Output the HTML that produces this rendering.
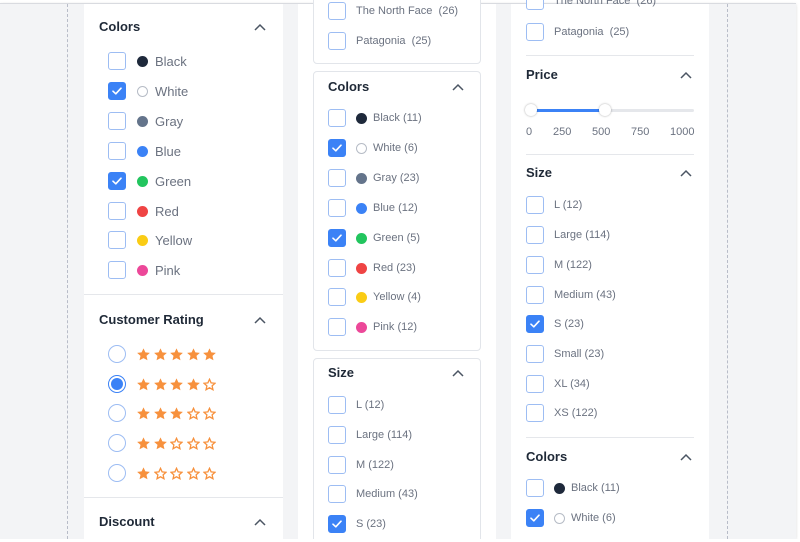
<!DOCTYPE html>
<html style="overflow:hidden;width:800px;height:542px"><head><meta charset="utf-8"><style>
*{box-sizing:border-box;margin:0;padding:0}
body{width:800px;height:542px;background:#fff;font-family:"Liberation Sans",Arial,sans-serif;position:relative;overflow:hidden}
.frame{position:absolute;left:0;top:3px;width:796px;height:536px;background:#f3f4f6;border-top:1px solid #d9dbe0;box-shadow:0 1px 3px rgba(0,0,0,.15)}
.dash{position:absolute;top:4px;height:535px;border-left:1px dashed #b8bcc8}
.panel{position:absolute;top:4px;height:535px;background:#fff}
.card{position:absolute;border:1px solid #e2e5ea;border-radius:4px;background:#fff}
.hr{position:absolute;height:1px;background:#e5e7eb}
.h{position:absolute;font-weight:bold;color:#1f2937;font-size:13px;line-height:16px}
.chev{position:absolute;width:12px;height:8px}
.r{position:absolute;display:flex;align-items:center;height:18px;color:#6b7280;white-space:nowrap}
.cb{width:18px;height:18px;border:1.5px solid #9dbdf3;border-radius:3px;background:#fff;flex:none;display:flex;align-items:center;justify-content:center}
.cb.on{background:#3b82f6;border-color:#3b82f6}
.d{width:11px;height:11px;border-radius:50%;flex:none}
.c1{font-size:13px}.c1 .cb{margin-right:11px}.c1 .d{margin-right:7px}
.c2{font-size:11px}.c2 .cb{margin-right:10px}.c2 .d{margin-right:6px}
.rad{width:18px;height:18px;border:1.5px solid #9dbdf3;border-radius:50%;flex:none;margin-right:11px;display:flex;align-items:center;justify-content:center}
.stars svg{width:13px;height:13px;margin-right:3.5px}
.lbl{position:absolute;font-size:11px;color:#6b7280;top:126px}
</style></head><body>
<svg width="0" height="0" style="position:absolute"><defs>
<symbol id="sf" viewBox="2 2 20 19"><path d="M12 2l2.9 6.3 6.9.7-5.2 4.6 1.5 6.8L12 17l-6.1 3.4 1.5-6.8L2.2 9l6.9-.7z" fill="#f7913d"/></symbol>
<symbol id="so" viewBox="2 2 20 19"><path d="M12 3.5l2.5 5.5 6 .6-4.5 4 1.3 5.9L12 16.5l-5.3 3 1.3-5.9-4.5-4 6-.6z" fill="none" stroke="#f7913d" stroke-width="2"/></symbol>
<symbol id="ck" viewBox="0 0 10 8"><path d="M1 4.2l2.8 2.6L9 1.2" fill="none" stroke="#fff" stroke-width="1.6" stroke-linecap="round" stroke-linejoin="round"/></symbol>
<symbol id="cv" viewBox="0 0 12 8"><path d="M1 7l5-5 5 5" fill="none" stroke="#4b5563" stroke-width="1.5"/></symbol>
</defs></svg>
<div class="frame"></div>
<div class="dash" style="left:67px"></div>
<div class="dash" style="left:727px"></div>

<!-- Column 1 -->
<div class="panel" style="left:84px;width:199px"></div>
<div class="h" style="left:99px;top:19px">Colors</div>
<svg class="chev" style="left:254px;top:23px"><use href="#cv"/></svg>
<div class="r c1" style="left:108px;top:52px"><span class="cb"></span><span class="d" style="background:#1e293b"></span>Black</div>
<div class="r c1" style="left:108px;top:82px"><span class="cb on"><svg width="10" height="8"><use href="#ck"/></svg></span><span class="d" style="border:1px solid #b6bcc6"></span>White</div>
<div class="r c1" style="left:108px;top:112px"><span class="cb"></span><span class="d" style="background:#64748b"></span>Gray</div>
<div class="r c1" style="left:108px;top:142px"><span class="cb"></span><span class="d" style="background:#3b82f6"></span>Blue</div>
<div class="r c1" style="left:108px;top:172px"><span class="cb on"><svg width="10" height="8"><use href="#ck"/></svg></span><span class="d" style="background:#22c55e"></span>Green</div>
<div class="r c1" style="left:108px;top:202px"><span class="cb"></span><span class="d" style="background:#ef4444"></span>Red</div>
<div class="r c1" style="left:108px;top:231px"><span class="cb"></span><span class="d" style="background:#facc15"></span>Yellow</div>
<div class="r c1" style="left:108px;top:261px"><span class="cb"></span><span class="d" style="background:#ec4899"></span>Pink</div>
<div class="hr" style="left:84px;width:199px;top:294px"></div>
<div class="h" style="left:99px;top:312px">Customer Rating</div>
<svg class="chev" style="left:254px;top:316px"><use href="#cv"/></svg>
<div class="r stars" style="left:108px;top:345px"><span class="rad"></span><svg><use href="#sf"/></svg><svg><use href="#sf"/></svg><svg><use href="#sf"/></svg><svg><use href="#sf"/></svg><svg><use href="#sf"/></svg></div>
<div class="r stars" style="left:108px;top:375px"><span class="rad" style="border-color:#3b82f6"><span style="width:12px;height:12px;border-radius:50%;background:#3b82f6"></span></span><svg><use href="#sf"/></svg><svg><use href="#sf"/></svg><svg><use href="#sf"/></svg><svg><use href="#sf"/></svg><svg><use href="#so"/></svg></div>
<div class="r stars" style="left:108px;top:404px"><span class="rad"></span><svg><use href="#sf"/></svg><svg><use href="#sf"/></svg><svg><use href="#sf"/></svg><svg><use href="#so"/></svg><svg><use href="#so"/></svg></div>
<div class="r stars" style="left:108px;top:434px"><span class="rad"></span><svg><use href="#sf"/></svg><svg><use href="#sf"/></svg><svg><use href="#so"/></svg><svg><use href="#so"/></svg><svg><use href="#so"/></svg></div>
<div class="r stars" style="left:108px;top:464px"><span class="rad"></span><svg><use href="#sf"/></svg><svg><use href="#so"/></svg><svg><use href="#so"/></svg><svg><use href="#so"/></svg><svg><use href="#so"/></svg></div>
<div class="hr" style="left:84px;width:199px;top:497px"></div>
<div class="h" style="left:99px;top:514px">Discount</div>
<svg class="chev" style="left:254px;top:518px"><use href="#cv"/></svg>

<!-- Column 2 -->
<div class="panel" style="left:298px;width:198px"></div>
<div class="card" style="left:313px;top:-10px;width:168px;height:74px"></div>
<div class="r c2" style="left:328px;top:2px"><span class="cb"></span>The North Face&nbsp; (26)</div>
<div class="r c2" style="left:328px;top:32px"><span class="cb"></span>Patagonia&nbsp; (25)</div>
<div class="card" style="left:313px;top:71px;width:168px;height:280px"></div>
<div class="h" style="left:328px;top:79px">Colors</div>
<svg class="chev" style="left:452px;top:83px"><use href="#cv"/></svg>
<div class="r c2" style="left:328px;top:109px"><span class="cb"></span><span class="d" style="background:#1e293b"></span>Black (11)</div>
<div class="r c2" style="left:328px;top:139px"><span class="cb on"><svg width="10" height="8"><use href="#ck"/></svg></span><span class="d" style="border:1px solid #b6bcc6"></span>White (6)</div>
<div class="r c2" style="left:328px;top:169px"><span class="cb"></span><span class="d" style="background:#64748b"></span>Gray (23)</div>
<div class="r c2" style="left:328px;top:199px"><span class="cb"></span><span class="d" style="background:#3b82f6"></span>Blue (12)</div>
<div class="r c2" style="left:328px;top:229px"><span class="cb on"><svg width="10" height="8"><use href="#ck"/></svg></span><span class="d" style="background:#22c55e"></span>Green (5)</div>
<div class="r c2" style="left:328px;top:259px"><span class="cb"></span><span class="d" style="background:#ef4444"></span>Red (23)</div>
<div class="r c2" style="left:328px;top:288px"><span class="cb"></span><span class="d" style="background:#facc15"></span>Yellow (4)</div>
<div class="r c2" style="left:328px;top:318px"><span class="cb"></span><span class="d" style="background:#ec4899"></span>Pink (12)</div>
<div class="card" style="left:313px;top:358px;width:168px;height:195px"></div>
<div class="h" style="left:328px;top:365px">Size</div>
<svg class="chev" style="left:452px;top:369px"><use href="#cv"/></svg>
<div class="r c2" style="left:328px;top:396px"><span class="cb"></span>L (12)</div>
<div class="r c2" style="left:328px;top:426px"><span class="cb"></span>Large (114)</div>
<div class="r c2" style="left:328px;top:456px"><span class="cb"></span>M (122)</div>
<div class="r c2" style="left:328px;top:485px"><span class="cb"></span>Medium (43)</div>
<div class="r c2" style="left:328px;top:515px"><span class="cb on"><svg width="10" height="8"><use href="#ck"/></svg></span>S (23)</div>

<!-- Column 3 -->
<div class="panel" style="left:511px;width:198px"></div>
<div class="r c2" style="left:526px;top:-8px"><span class="cb"></span>The North Face&nbsp; (26)</div>
<div class="r c2" style="left:526px;top:23px"><span class="cb"></span>Patagonia&nbsp; (25)</div>
<div class="hr" style="left:526px;width:168px;top:55px"></div>
<div class="h" style="left:526px;top:67px">Price</div>
<svg class="chev" style="left:680px;top:71px"><use href="#cv"/></svg>
<div style="position:absolute;left:531px;top:109px;width:163px;height:3px;background:#e5e7eb;border-radius:2px"></div>
<div style="position:absolute;left:531px;top:109px;width:74px;height:3px;background:#3b82f6"></div>
<div style="position:absolute;left:525px;top:104px;width:12px;height:12px;border-radius:50%;background:#fff;box-shadow:0 0 2px rgba(0,0,0,.35)"></div>
<div style="position:absolute;left:599px;top:104px;width:12px;height:12px;border-radius:50%;background:#fff;box-shadow:0 0 2px rgba(0,0,0,.35)"></div>
<div class="lbl" style="left:526px">0</div>
<div class="lbl" style="left:553px">250</div>
<div class="lbl" style="left:592px">500</div>
<div class="lbl" style="left:631px">750</div>
<div class="lbl" style="left:670px">1000</div>
<div class="hr" style="left:526px;width:168px;top:154px"></div>
<div class="h" style="left:526px;top:165px">Size</div>
<svg class="chev" style="left:680px;top:169px"><use href="#cv"/></svg>
<div class="r c2" style="left:526px;top:196px"><span class="cb"></span>L (12)</div>
<div class="r c2" style="left:526px;top:226px"><span class="cb"></span>Large (114)</div>
<div class="r c2" style="left:526px;top:256px"><span class="cb"></span>M (122)</div>
<div class="r c2" style="left:526px;top:286px"><span class="cb"></span>Medium (43)</div>
<div class="r c2" style="left:526px;top:315px"><span class="cb on"><svg width="10" height="8"><use href="#ck"/></svg></span>S (23)</div>
<div class="r c2" style="left:526px;top:345px"><span class="cb"></span>Small (23)</div>
<div class="r c2" style="left:526px;top:375px"><span class="cb"></span>XL (34)</div>
<div class="r c2" style="left:526px;top:404px"><span class="cb"></span>XS (122)</div>
<div class="hr" style="left:526px;width:168px;top:437px"></div>
<div class="h" style="left:526px;top:449px">Colors</div>
<svg class="chev" style="left:680px;top:453px"><use href="#cv"/></svg>
<div class="r c2" style="left:526px;top:479px"><span class="cb"></span><span class="d" style="background:#1e293b"></span>Black (11)</div>
<div class="r c2" style="left:526px;top:509px"><span class="cb on"><svg width="10" height="8"><use href="#ck"/></svg></span><span class="d" style="border:1px solid #b6bcc6"></span>White (6)</div>
<div style="position:absolute;left:0;top:539px;width:800px;height:3px;background:#fff"></div>
</body></html>
